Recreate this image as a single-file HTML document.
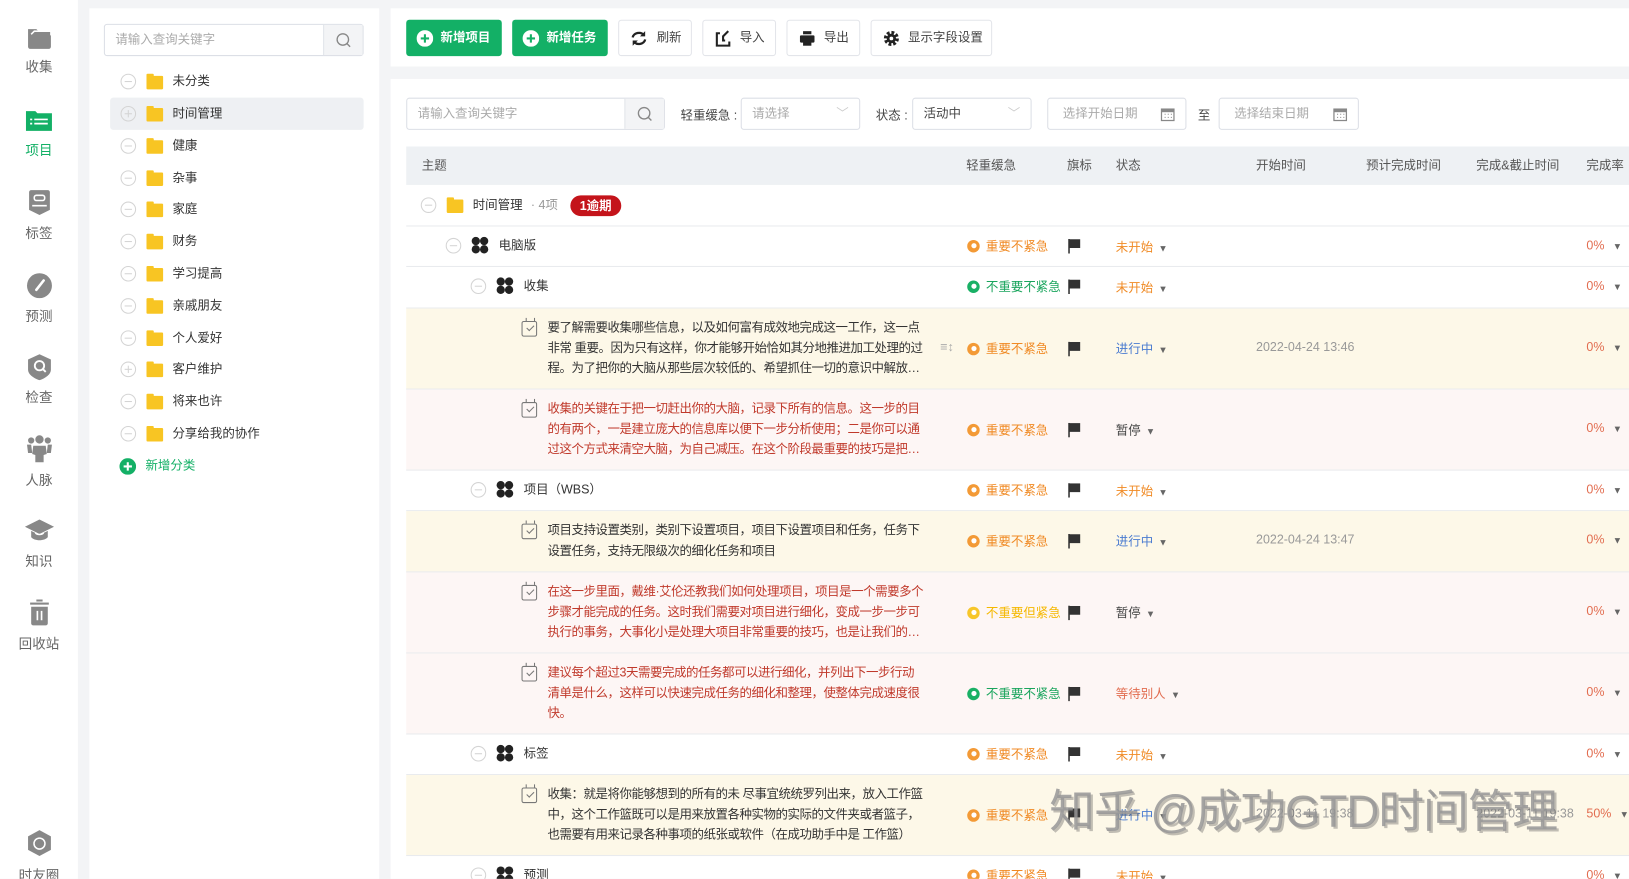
<!DOCTYPE html>
<html><head><meta charset="utf-8">
<style>
*{box-sizing:border-box;margin:0;padding:0}
html,body{width:1629px;height:879px;overflow:hidden;background:#f3f4f6}
body{font-family:"Liberation Sans","Noto Sans CJK SC",sans-serif;font-size:12px;color:#333}
#w{position:absolute;left:0;top:0;width:1568px;height:846px;transform:scale(1.0389);transform-origin:0 0;background:#f3f4f6;overflow:hidden}
.abs{position:absolute}
.nav{left:0;top:0;width:75px;height:846px;background:#fff}
.ni{position:absolute;left:0;width:75px;text-align:center;font-size:13px;color:#666}
.ni svg{display:block;margin:0 auto 6px}
.cat{left:86px;top:8px;width:279px;height:838px;background:#fff}
.inp{position:absolute;border:1px solid #dcdfe6;border-radius:3px;background:#fff;color:#aaa;font-size:12px}
.inp .btn{position:absolute;right:0;top:0;bottom:0;width:38px;background:#f3f4f6;border-left:1px solid #e3e5ea}
.ci{position:absolute;left:106px;width:244px;height:31px;line-height:31px;font-size:12px;color:#333}
.ci.sel{background:#eef0f3;border-radius:3px}
.cm{position:absolute;width:15px;height:15px;border:1px solid #d4d4d4;border-radius:50%;}
.cm:after{content:"";position:absolute;left:3px;top:6px;width:7px;height:1px;background:#d4d4d4}
.cm.p:before{content:"";position:absolute;left:6px;top:3px;width:1px;height:7px;background:#d4d4d4}
.fd{position:absolute;width:16px;height:13px;background:#f8c523;border-radius:1px}
.fd:before{content:"";position:absolute;left:0;top:-2px;width:7px;height:3px;background:#f8c523;border-radius:1px 1px 0 0}
.tb{left:376px;top:8px;width:1192px;height:56px;background:#fff}
.b{position:absolute;top:19px;height:35px;border-radius:3px;font-size:12px;line-height:35px;display:flex;align-items:center}
.bg{background:#13b066;color:#fff;font-weight:bold}
.bw{background:#fff;border:1px solid #e3e5ea;color:#444}
.main{left:376px;top:76px;width:1192px;height:770px;background:#fff}
.hdr{left:391px;top:141px;width:1177px;height:37px;background:#eef1f4;color:#555;font-size:12px;line-height:37px}
.hdr span{position:absolute}
.row{position:absolute;left:391px;width:1177px;border-bottom:1px solid #e9ebee}
.y{background:#fdf8e8}.pk{background:#fdf6f5}
.t{position:absolute;font-size:12px;line-height:19.5px}
.cl{display:-webkit-box;-webkit-line-clamp:3;-webkit-box-orient:vertical;overflow:hidden;letter-spacing:-0.45px;width:362px}
.red{color:#c0392b}
.pr{position:absolute;left:540px;display:flex;align-items:center;font-size:12px;white-space:nowrap;margin-top:-3px}
.pd{width:12px;height:12px;border-radius:50%;margin-right:6px;position:relative}
.pd:after{content:"";position:absolute;left:3.5px;top:3.5px;width:5px;height:5px;border-radius:50%;background:#fff}
.or{color:#f08a24}.or .pd{background:#f39a36}
.gr{color:#1aa55d}.gr .pd{background:#19b065}
.yl{color:#f5b800}.yl .pd{background:#f7c62a}
.fl{position:absolute;left:637px}
.st{position:absolute;left:683px;font-size:12px;white-space:nowrap}
.st i{font-style:normal;color:#666;font-size:9px;margin-left:5px}
.pc{position:absolute;left:1136px;color:#e26d50;font-size:12px;white-space:nowrap}
.pc i{font-style:normal;color:#666;font-size:9px;margin-left:8px}
.dt{position:absolute;left:818px;color:#999;font-size:12px}
.ck{position:absolute;width:15px;height:15px;border:1.3px solid #777;border-radius:2px}
.ck:before{content:"";position:absolute;left:3.5px;top:3px;width:6px;height:3px;border-left:1.3px solid #777;border-bottom:1.3px solid #777;transform:rotate(-45deg)}
.ck:after{content:"";position:absolute;left:3px;top:-4px;width:7px;height:3px;border-left:1.3px solid #777;border-right:1.3px solid #777}
.fr{position:absolute;width:17px;height:17px}
.fr b{position:absolute;width:8px;height:8px;border-radius:50%;background:#222}
</style></head><body><div id="w">

<div class="abs nav">
 <div class="ni" style="top:24px"><svg width="28" height="24" viewBox="0 0 28 24"><path d="M3 4h8l2 2h12v15a2 2 0 0 1-2 2H5a2 2 0 0 1-2-2z" fill="#888"/><path d="M6 9l3-3h16v4" fill="none" stroke="#fff" stroke-width="1.5"/></svg>收集</div>
 <div class="ni" style="top:104px;color:#13b066"><svg width="28" height="24" viewBox="0 0 28 24"><path d="M1 3h9l2 2h14v17H1z" fill="#13b066"/><g stroke="#fff" stroke-width="1.6"><path d="M5 11h2M9 11h13M5 15h2M9 15h13"/></g></svg>项目</div>
 <div class="ni" style="top:182px"><svg width="28" height="26" viewBox="0 0 28 26"><path d="M4 3a2 2 0 0 1 2-2h16a2 2 0 0 1 2 2v17l-10 5-10-5z" fill="#888"/><rect x="9" y="6" width="10" height="5" rx="2" fill="none" stroke="#fff" stroke-width="1.5"/><path d="M7 16h14" stroke="#fff" stroke-width="1.5"/></svg>标签</div>
 <div class="ni" style="top:262px"><svg width="28" height="26" viewBox="0 0 28 26"><circle cx="14" cy="13" r="12" fill="#888"/><path d="M11 17l7-9" stroke="#fff" stroke-width="2.5" stroke-linecap="round"/></svg>预测</div>
 <div class="ni" style="top:340px"><svg width="28" height="26" viewBox="0 0 28 26"><path d="M14 1l11 5v10c0 4-5 8-11 10C8 24 3 20 3 16V6z" fill="#888"/><circle cx="14" cy="12" r="4.5" fill="none" stroke="#fff" stroke-width="1.8"/><path d="M17 15l3 3" stroke="#fff" stroke-width="1.8"/></svg>检查</div>
 <div class="ni" style="top:418px"><svg width="28" height="28" viewBox="0 0 28 28"><circle cx="14" cy="5" r="4" fill="#888"/><circle cx="6" cy="6" r="3" fill="#888"/><circle cx="22" cy="6" r="3" fill="#888"/><path d="M8 11h12l1 8-3 1v7h-8v-7l-3-1z" fill="#888"/><path d="M2 10h4l1 8H3zM22 10h4l-1 8h-4z" fill="#888"/></svg>人脉</div>
 <div class="ni" style="top:498px"><svg width="30" height="26" viewBox="0 0 30 26"><path d="M15 2l14 7-14 7L1 9z" fill="#888"/><path d="M7 13v6c3 4 13 4 16 0v-6l-8 4z" fill="#888"/><path d="M11 15c2 2 6 2 8 0" stroke="#fff" stroke-width="1.4" fill="none"/></svg>知识</div>
 <div class="ni" style="top:577px"><svg width="28" height="26" viewBox="0 0 28 26"><rect x="5" y="3" width="18" height="2" fill="#888"/><rect x="11" y="0" width="6" height="2" fill="#888"/><path d="M6 7h16v16a2 2 0 0 1-2 2H8a2 2 0 0 1-2-2z" fill="#888"/><path d="M12 11v9M16 11v9" stroke="#fff" stroke-width="1.6"/></svg>回收站</div>
 <div class="ni" style="top:798px"><svg width="28" height="28" viewBox="0 0 28 28"><path d="M14 1l11 6v13l-11 6-11-6V7z" fill="#888"/><circle cx="14" cy="14" r="6" fill="#fff"/><circle cx="14" cy="14" r="4.5" fill="#888"/></svg>时友圈</div>
</div>

<div class="abs cat"></div>
<div class="inp" style="left:100px;top:23px;width:250px;height:31px;line-height:29px;padding-left:10px">请输入查询关键字<div class="btn"><svg style="position:absolute;left:11px;top:7px" width="16" height="16" viewBox="0 0 16 16"><circle cx="7" cy="7" r="5.5" fill="none" stroke="#888" stroke-width="1.3"/><path d="M11 11l3 3" stroke="#888" stroke-width="1.3"/></svg></div></div>

<div class="ci" style="top:63px"><div class="cm" style="left:10px;top:8px"></div><div class="fd" style="left:35px;top:10px"></div><span style="position:absolute;left:60px">未分类</span></div>
<div class="ci sel" style="top:94px"><div class="cm p" style="left:10px;top:8px"></div><div class="fd" style="left:35px;top:10px"></div><span style="position:absolute;left:60px">时间管理</span></div>
<div class="ci" style="top:125px"><div class="cm" style="left:10px;top:8px"></div><div class="fd" style="left:35px;top:10px"></div><span style="position:absolute;left:60px">健康</span></div>
<div class="ci" style="top:156px"><div class="cm" style="left:10px;top:8px"></div><div class="fd" style="left:35px;top:10px"></div><span style="position:absolute;left:60px">杂事</span></div>
<div class="ci" style="top:186px"><div class="cm" style="left:10px;top:8px"></div><div class="fd" style="left:35px;top:10px"></div><span style="position:absolute;left:60px">家庭</span></div>
<div class="ci" style="top:217px"><div class="cm" style="left:10px;top:8px"></div><div class="fd" style="left:35px;top:10px"></div><span style="position:absolute;left:60px">财务</span></div>
<div class="ci" style="top:248px"><div class="cm" style="left:10px;top:8px"></div><div class="fd" style="left:35px;top:10px"></div><span style="position:absolute;left:60px">学习提高</span></div>
<div class="ci" style="top:279px"><div class="cm" style="left:10px;top:8px"></div><div class="fd" style="left:35px;top:10px"></div><span style="position:absolute;left:60px">亲戚朋友</span></div>
<div class="ci" style="top:310px"><div class="cm" style="left:10px;top:8px"></div><div class="fd" style="left:35px;top:10px"></div><span style="position:absolute;left:60px">个人爱好</span></div>
<div class="ci" style="top:340px"><div class="cm p" style="left:10px;top:8px"></div><div class="fd" style="left:35px;top:10px"></div><span style="position:absolute;left:60px">客户维护</span></div>
<div class="ci" style="top:371px"><div class="cm" style="left:10px;top:8px"></div><div class="fd" style="left:35px;top:10px"></div><span style="position:absolute;left:60px">将来也许</span></div>
<div class="ci" style="top:402px"><div class="cm" style="left:10px;top:8px"></div><div class="fd" style="left:35px;top:10px"></div><span style="position:absolute;left:60px">分享给我的协作</span></div>
<div class="ci" style="top:433px;color:#13b066"><svg style="position:absolute;left:9px;top:8px" width="16" height="16" viewBox="0 0 16 16"><circle cx="8" cy="8" r="8" fill="#13b066"/><path d="M8 4v8M4 8h8" stroke="#fff" stroke-width="2"/></svg><span style="position:absolute;left:34px">新增分类</span></div>

<div class="abs tb"></div>
<div class="b bg" style="left:391px;width:92px"><svg style="margin:0 7px 0 10px" width="16" height="16" viewBox="0 0 16 16"><circle cx="8" cy="8" r="8" fill="#fff"/><path d="M8 4v8M4 8h8" stroke="#13b066" stroke-width="2"/></svg>新增项目</div>
<div class="b bg" style="left:493px;width:92px"><svg style="margin:0 7px 0 10px" width="16" height="16" viewBox="0 0 16 16"><circle cx="8" cy="8" r="8" fill="#fff"/><path d="M8 4v8M4 8h8" stroke="#13b066" stroke-width="2"/></svg>新增任务</div>
<div class="b bw" style="left:595px;width:71px"><svg style="margin:0 9px 0 11px" width="16" height="16" viewBox="0 0 16 16"><path d="M2 7a6 5 0 0 1 11-2" fill="none" stroke="#222" stroke-width="2.2"/><path d="M14 1v5h-5z" fill="#222"/><path d="M14 9a6 5 0 0 1-11 2" fill="none" stroke="#222" stroke-width="2.2"/><path d="M2 15v-5h5z" fill="#222"/></svg>刷新</div>
<div class="b bw" style="left:676px;width:71px"><svg style="margin:0 8px 0 11px" width="16" height="16" viewBox="0 0 16 16"><path d="M5 3H2v12h12v-4" fill="none" stroke="#222" stroke-width="2"/><path d="M13 1L8 6v4h2" fill="none" stroke="#222" stroke-width="2"/></svg>导入</div>
<div class="b bw" style="left:757px;width:71px"><svg style="margin:0 8px 0 11px" width="16" height="16" viewBox="0 0 16 16"><rect x="4" y="1" width="8" height="3" fill="#222"/><rect x="1" y="5" width="14" height="7" rx="1" fill="#222"/><rect x="4" y="10" width="8" height="5" fill="#222"/></svg>导出</div>
<div class="b bw" style="left:838px;width:117px"><svg style="margin:0 8px 0 11px" width="16" height="16" viewBox="0 0 16 16"><circle cx="8" cy="8" r="5.5" fill="none" stroke="#222" stroke-width="3.5" stroke-dasharray="2.6 1.7"/><circle cx="8" cy="8" r="4.5" fill="#222"/><circle cx="8" cy="8" r="1.8" fill="#fff"/></svg>显示字段设置</div>

<div class="abs main"></div>
<div class="inp" style="left:391px;top:94px;width:249px;height:31px;line-height:29px;padding-left:10px">请输入查询关键字<div class="btn"><svg style="position:absolute;left:11px;top:7px" width="16" height="16" viewBox="0 0 16 16"><circle cx="7" cy="7" r="5.5" fill="none" stroke="#888" stroke-width="1.3"/><path d="M11 11l3 3" stroke="#888" stroke-width="1.3"/></svg></div></div>
<div class="abs" style="left:655px;top:102px;color:#444">轻重缓急 :</div>
<div class="inp" style="left:713px;top:94px;width:115px;height:31px;line-height:29px;padding-left:10px">请选择<span style="position:absolute;right:10px;color:#ccc">﹀</span></div>
<div class="abs" style="left:843px;top:102px;color:#444">状态 :</div>
<div class="inp" style="left:878px;top:94px;width:115px;height:31px;line-height:29px;padding-left:10px;color:#444">活动中<span style="position:absolute;right:10px;color:#ccc">﹀</span></div>
<div class="inp" style="left:1008px;top:94px;width:134px;height:31px;line-height:29px;padding-left:14px">选择开始日期<svg style="position:absolute;right:10px;top:8px" width="14" height="14" viewBox="0 0 14 14"><rect x="1" y="2" width="12" height="11" fill="none" stroke="#888" stroke-width="1.2"/><rect x="1" y="2" width="12" height="3" fill="#888"/><path d="M4 7h1M7 7h1M10 7h1M4 10h1M7 10h1M10 10h1" stroke="#888"/></svg></div>
<div class="abs" style="left:1153px;top:102px;color:#444">至</div>
<div class="inp" style="left:1173px;top:94px;width:135px;height:31px;line-height:29px;padding-left:14px">选择结束日期<svg style="position:absolute;right:10px;top:8px" width="14" height="14" viewBox="0 0 14 14"><rect x="1" y="2" width="12" height="11" fill="none" stroke="#888" stroke-width="1.2"/><rect x="1" y="2" width="12" height="3" fill="#888"/><path d="M4 7h1M7 7h1M10 7h1M4 10h1M7 10h1M10 10h1" stroke="#888"/></svg></div>

<div class="abs hdr"><span style="left:15px">主题</span><span style="left:539px">轻重缓急</span><span style="left:636px">旗标</span><span style="left:683px">状态</span><span style="left:818px">开始时间</span><span style="left:924px">预计完成时间</span><span style="left:1030px">完成&amp;截止时间</span><span style="left:1136px">完成率</span></div>

<div class="row" style="top:178px;height:40px"><div class="cm" style="left:14px;top:12px"></div><div class="fd" style="left:39px;top:14px"></div><span class="t" style="left:64px;top:10px">时间管理</span><span class="t" style="left:120px;top:10px;color:#999">· 4项</span><span class="abs" style="left:158px;top:10px;background:#c4141b;color:#fff;font-weight:bold;border-radius:10px;padding:0 9px;height:20px;line-height:20px">1逾期</span></div>

<div class="row" style="top:218px;height:39px"><div class="cm" style="left:38px;top:11px"></div><div class="fr" style="left:63px;top:10px"><b style="left:0;top:0"></b><b style="left:8px;top:0"></b><b style="left:0;top:8px"></b><b style="left:8px;top:8px"></b></div><span class="t" style="left:89px;top:9px">电脑版</span>
<div class="pr or" style="top:13px"><div class="pd"></div>重要不紧急</div><svg class="fl" style="top:12px" width="12" height="14" viewBox="0 0 12 14"><path d="M1 0v14M1 1h10v7H1" fill="#333" stroke="#333" stroke-width="1.5"/></svg><div class="st" style="top:11px;color:#f08a24">未开始<i>▼</i></div><div class="pc" style="top:11px">0%<i>▼</i></div></div>

<div class="row" style="top:257px;height:40px"><div class="cm" style="left:62px;top:11px"></div><div class="fr" style="left:87px;top:10px"><b style="left:0;top:0"></b><b style="left:8px;top:0"></b><b style="left:0;top:8px"></b><b style="left:8px;top:8px"></b></div><span class="t" style="left:113px;top:9px">收集</span>
<div class="pr gr" style="top:13px"><div class="pd"></div>不重要不紧急</div><svg class="fl" style="top:12px" width="12" height="14" viewBox="0 0 12 14"><path d="M1 0v14M1 1h10v7H1" fill="#333" stroke="#333" stroke-width="1.5"/></svg><div class="st" style="top:11px;color:#f08a24">未开始<i>▼</i></div><div class="pc" style="top:11px">0%<i>▼</i></div></div>

<div class="row y" style="top:297px;height:78px"><div class="ck" style="left:111px;top:12px"></div><div class="t cl" style="left:136px;top:9px">要了解需要收集哪些信息，以及如何富有成效地完成这一工作，这一点非常 重要。因为只有这样，你才能够开始恰如其分地推进加工处理的过程。为了把你的大脑从那些层次较低的、希望抓住一切的意识中解放出来</div>
<span class="abs" style="left:514px;top:30px;color:#aaa">≡↕</span><div class="pr or" style="top:33px"><div class="pd"></div>重要不紧急</div><svg class="fl" style="top:32px" width="12" height="14" viewBox="0 0 12 14"><path d="M1 0v14M1 1h10v7H1" fill="#333" stroke="#333" stroke-width="1.5"/></svg><div class="st" style="top:30px;color:#4a7bd0">进行中<i>▼</i></div><div class="dt" style="top:30px">2022-04-24 13:46</div><div class="pc" style="top:30px">0%<i>▼</i></div></div>

<div class="row pk" style="top:375px;height:78px"><div class="ck" style="left:111px;top:12px"></div><div class="t cl red" style="left:136px;top:9px">收集的关键在于把一切赶出你的大脑，记录下所有的信息。这一步的目的有两个，一是建立庞大的信息库以便下一步分析使用；二是你可以通过这个方式来清空大脑，为自己减压。在这个阶段最重要的技巧是把一切</div>
<div class="pr or" style="top:33px"><div class="pd"></div>重要不紧急</div><svg class="fl" style="top:32px" width="12" height="14" viewBox="0 0 12 14"><path d="M1 0v14M1 1h10v7H1" fill="#333" stroke="#333" stroke-width="1.5"/></svg><div class="st" style="top:30px;color:#444">暂停<i>▼</i></div><div class="pc" style="top:30px">0%<i>▼</i></div></div>

<div class="row" style="top:453px;height:39px"><div class="cm" style="left:62px;top:11px"></div><div class="fr" style="left:87px;top:10px"><b style="left:0;top:0"></b><b style="left:8px;top:0"></b><b style="left:0;top:8px"></b><b style="left:8px;top:8px"></b></div><span class="t" style="left:113px;top:9px">项目（WBS）</span>
<div class="pr or" style="top:13px"><div class="pd"></div>重要不紧急</div><svg class="fl" style="top:12px" width="12" height="14" viewBox="0 0 12 14"><path d="M1 0v14M1 1h10v7H1" fill="#333" stroke="#333" stroke-width="1.5"/></svg><div class="st" style="top:11px;color:#f08a24">未开始<i>▼</i></div><div class="pc" style="top:11px">0%<i>▼</i></div></div>

<div class="row y" style="top:492px;height:59px"><div class="ck" style="left:111px;top:12px"></div><div class="t cl" style="left:136px;top:9px">项目支持设置类别，类别下设置项目，项目下设置项目和任务，任务下设置任务，支持无限级次的细化任务和项目</div>
<div class="pr or" style="top:23px"><div class="pd"></div>重要不紧急</div><svg class="fl" style="top:22px" width="12" height="14" viewBox="0 0 12 14"><path d="M1 0v14M1 1h10v7H1" fill="#333" stroke="#333" stroke-width="1.5"/></svg><div class="st" style="top:20px;color:#4a7bd0">进行中<i>▼</i></div><div class="dt" style="top:20px">2022-04-24 13:47</div><div class="pc" style="top:20px">0%<i>▼</i></div></div>

<div class="row pk" style="top:551px;height:78px"><div class="ck" style="left:111px;top:12px"></div><div class="t cl red" style="left:136px;top:9px">在这一步里面，戴维·艾伦还教我们如何处理项目，项目是一个需要多个步骤才能完成的任务。这时我们需要对项目进行细化，变成一步一步可执行的事务，大事化小是处理大项目非常重要的技巧，也是让我们的工作更加</div>
<div class="pr yl" style="top:33px"><div class="pd"></div>不重要但紧急</div><svg class="fl" style="top:32px" width="12" height="14" viewBox="0 0 12 14"><path d="M1 0v14M1 1h10v7H1" fill="#333" stroke="#333" stroke-width="1.5"/></svg><div class="st" style="top:30px;color:#444">暂停<i>▼</i></div><div class="pc" style="top:30px">0%<i>▼</i></div></div>

<div class="row pk" style="top:629px;height:78px"><div class="ck" style="left:111px;top:12px"></div><div class="t cl red" style="left:136px;top:9px">建议每个超过3天需要完成的任务都可以进行细化，并列出下一步行动清单是什么，这样可以快速完成任务的细化和整理，使整体完成速度很快。</div>
<div class="pr gr" style="top:33px"><div class="pd"></div>不重要不紧急</div><svg class="fl" style="top:32px" width="12" height="14" viewBox="0 0 12 14"><path d="M1 0v14M1 1h10v7H1" fill="#333" stroke="#333" stroke-width="1.5"/></svg><div class="st" style="top:30px;color:#e26d50">等待别人<i>▼</i></div><div class="pc" style="top:30px">0%<i>▼</i></div></div>

<div class="row" style="top:707px;height:39px"><div class="cm" style="left:62px;top:11px"></div><div class="fr" style="left:87px;top:10px"><b style="left:0;top:0"></b><b style="left:8px;top:0"></b><b style="left:0;top:8px"></b><b style="left:8px;top:8px"></b></div><span class="t" style="left:113px;top:9px">标签</span>
<div class="pr or" style="top:13px"><div class="pd"></div>重要不紧急</div><svg class="fl" style="top:12px" width="12" height="14" viewBox="0 0 12 14"><path d="M1 0v14M1 1h10v7H1" fill="#333" stroke="#333" stroke-width="1.5"/></svg><div class="st" style="top:11px;color:#f08a24">未开始<i>▼</i></div><div class="pc" style="top:11px">0%<i>▼</i></div></div>

<div class="row y" style="top:746px;height:78px"><div class="ck" style="left:111px;top:12px"></div><div class="t cl" style="left:136px;top:9px">收集：就是将你能够想到的所有的未 尽事宜统统罗列出来，放入工作篮中，这个工作篮既可以是用来放置各种实物的实际的文件夹或者篮子，也需要有用来记录各种事项的纸张或软件（在成功助手中是 工作篮）</div>
<div class="pr or" style="top:33px"><div class="pd"></div>重要不紧急</div><svg class="fl" style="top:32px" width="12" height="14" viewBox="0 0 12 14"><path d="M1 0v14M1 1h10v7H1" fill="#333" stroke="#333" stroke-width="1.5"/></svg><div class="st" style="top:30px;color:#4a7bd0">进行中<i>▼</i></div><div class="dt" style="top:30px">2022-03-11 19:38</div><div class="dt" style="left:1030px;top:30px">2022-03-11 19:38</div><div class="pc" style="top:30px">50%<i>▼</i></div></div>

<div class="row" style="top:824px;height:39px"><div class="cm" style="left:62px;top:11px"></div><div class="fr" style="left:87px;top:10px"><b style="left:0;top:0"></b><b style="left:8px;top:0"></b><b style="left:0;top:8px"></b><b style="left:8px;top:8px"></b></div><span class="t" style="left:113px;top:9px">预测</span>
<div class="pr or" style="top:13px"><div class="pd"></div>重要不紧急</div><svg class="fl" style="top:12px" width="12" height="14" viewBox="0 0 12 14"><path d="M1 0v14M1 1h10v7H1" fill="#333" stroke="#333" stroke-width="1.5"/></svg><div class="st" style="top:11px;color:#f08a24">未开始<i>▼</i></div><div class="pc" style="top:11px">0%<i>▼</i></div></div>

<div class="abs" style="left:1010px;top:754px;font-size:44px;line-height:56px;color:rgba(150,150,150,0.85);text-shadow:2px 2px 0 rgba(80,80,80,0.35);white-space:nowrap;letter-spacing:-1px">知乎 @成功GTD时间管理</div>
</div></body></html>
